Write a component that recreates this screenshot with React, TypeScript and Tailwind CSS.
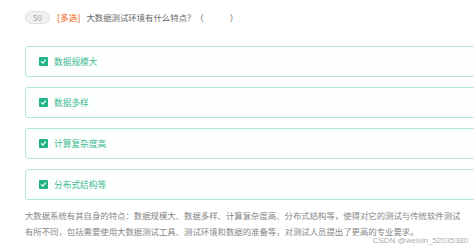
const OPTIONS = ['数据规模大', '数据多样', '计算复杂度高', '分布式结构等'];

function Check() {
  return (
    <span className="w-[9px] h-[9px] rounded-[1px] bg-[#22b386] flex items-center justify-center shrink-0">
      <svg width="7" height="7" viewBox="0 0 10 10" fill="none">
        <path d="M2 5.2l2 2 4-4.4" stroke="white" strokeWidth="1.7" strokeLinecap="round" strokeLinejoin="round" />
      </svg>
    </span>
  );
}

export default function App() {
  return (
    <div
      className="relative w-[474px] h-[247px] overflow-hidden bg-white"
      style={{ fontFamily: '"Noto Sans CJK SC", "Noto Sans", sans-serif' }}
    >
      <div className="pl-[25px] pt-[11px]">
        {/* Question */}
        <div className="flex items-center h-[13px]">
          <span className="w-[25px] h-[13px] rounded-full bg-[#f1f1f1] border border-[#e0e0e0] text-[#a5a5a5] text-[8px] leading-none flex items-center justify-center">
            50
          </span>
          <span className="ml-[7px] text-[#f2915a] font-bold text-[8.5px]">[多选]</span>
          <span className="ml-[6px] text-[#666] text-[8.4px]">大数据测试环境有什么特点？（</span>
          <span className="ml-[26px] text-[#666] text-[8.4px]">）</span>
        </div>

        {/* Options */}
        <div className="mt-[22px] flex flex-col gap-[10px]">
          {OPTIONS.map((o) => (
            <div
              key={o}
              className="w-[470px] h-[31px] rounded-[3px] border border-[#b3e8d7] bg-[#fcfffe] flex items-center pl-[13px] gap-[6px]"
            >
              <Check />
              <span className="text-[#3dba93] text-[8.7px]">{o}</span>
            </div>
          ))}
        </div>

        {/* Explanation */}
        <p className="mt-[7px] pr-[10px] text-[#858585] text-[8.4px] leading-[16px]">
          大数据系统有其自身的特点：数据规模大、数据多样、计算复杂度高、分布式结构等，使得对它的测试与传统软件测试有所不同，包括需要使用大数据测试工具、测试环境和数据的准备等，对测试人员提出了更高的专业要求。
        </p>
      </div>

      <span
        className="absolute right-[6px] bottom-[2px] text-[#adadad] text-[8px] leading-none"
        style={{ fontFamily: '"Liberation Sans", Arial, sans-serif' }}
      >
        CSDN @weixin_52035380
      </span>
    </div>
  );
}
